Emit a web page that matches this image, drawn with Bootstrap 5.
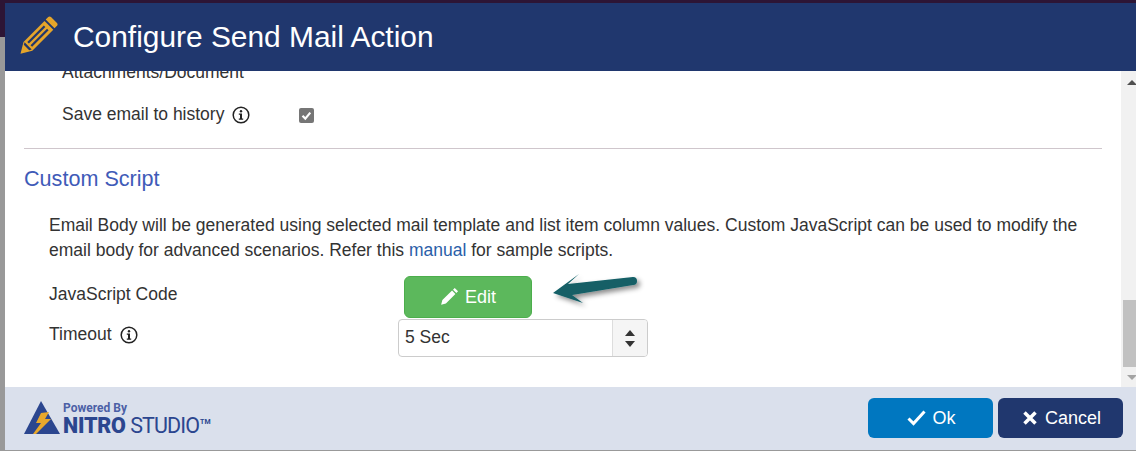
<!DOCTYPE html>
<html lang="en">
<head>
<meta charset="utf-8">
<title>Configure Send Mail Action</title>
<link href="https://cdn.jsdelivr.net/npm/bootstrap@5.3.0/dist/css/bootstrap.min.css" rel="stylesheet">
<style>
html,body{height:100%;overflow:hidden}
body{background:linear-gradient(#2d1535 37px,#999 37px);font-family:"Liberation Sans",Arial,sans-serif;font-size:17.5px;color:#333;position:relative}
.topstrip{height:3px;background:#2d1535}
.dlg{margin-left:5px;height:447px;background:#fff}
.dlg-head{height:68px;background:#20376e;color:#fff;padding-left:15px}
.dlg-head svg{width:38px;height:38px;margin-right:15px;margin-top:-4px}
.dlg-title{font-size:29.9px;line-height:1;margin:-1px 0 0;font-weight:400}
.dlg-mid{height:316px;overflow:hidden}
.scrollpane{width:1116px;overflow:hidden}
.track{width:15px;background:#f1f1f1;padding-top:9px}
.tri-up{width:0;height:0;border:5px solid transparent;border-top:0;border-bottom:5px solid #505050;margin-left:6px}
.tri-down{width:0;height:0;border:5px solid transparent;border-bottom:0;border-top:5px solid #a3a3a3;margin-left:6px}
.thumb{height:67px;background:#c1c1c1;margin:215px 0 8px 2px}
.innerpad{padding:0 19px 0 19px}
.att{margin:-9px 0 0 38px;line-height:20px}
.saverow{margin:21px 0 0 38px;line-height:24px;height:24px}
.savelbl{width:237px;padding-bottom:2px}
.iico{width:18px;height:18px;margin-left:8px;vertical-align:-4px}
.fakecheck{width:15px;height:15px;background:#767676;border-radius:2px}
.fakecheck svg{width:15px;height:15px;display:block}
.rule{margin:21px 0 0;border:0;border-top:1px solid #cfc6cc;opacity:1}
.sect{color:#3f5bb8;font-size:21.6px;font-weight:400;margin:18px 0 0;line-height:24px}
.desc{margin:22px 20px 0 25px;line-height:25px}
.desc a{color:#2a5ea8;text-decoration:none}
.coderow{margin:13px 0 0 25px;height:43px}
.codelbl{width:355px;padding-top:6px;line-height:24px;height:30px}
.editbtn{width:128px;height:42px;background:#5cb85c;border:1px solid #4cae4c;color:#fff;border-radius:6px;font-size:18px;padding:0}
.editbtn svg{width:19px;height:19px;margin-right:6px;vertical-align:-3px}
.timerow{margin:0 0 0 25px}
.timelbl{width:349px;padding-top:3px;line-height:24px}
.sel{width:250px;height:38px;border:1px solid #ccc;border-radius:4px;background:#fff}
.selval{padding-left:6px;line-height:34px;color:#333}
.spin{width:35px;background:#f5f5f5;border-left:1px solid #ddd;border-radius:0 3px 3px 0}
.spin i{display:block;width:0;height:0;border-left:5.500px solid transparent;border-right:5.500px solid transparent}
.spin .up{border-bottom:6px solid #333;margin-bottom:5px}
.spin .dn{border-top:6px solid #333}
.dlg-foot{height:63px;background:#dae0ec;padding:11px 13px 0 19px}
.logotext{line-height:1;padding-top:4px}
.lg1{font-size:12px;font-weight:700;font-family:Roboto,"Liberation Sans",sans-serif;display:block;margin-bottom:1px;color:#4c60a6}
.lg2{font-size:21.5px;font-family:Roboto,"Liberation Sans",sans-serif;color:#2b468f;letter-spacing:-.9px;white-space:nowrap}
.lg2 b{font-weight:900;letter-spacing:-.2px}
.lg2 sup{font-size:7px;font-weight:700;top:-1.3em;margin-left:1px;letter-spacing:0}
.logomark{width:36px;height:36px;margin-right:3px;margin-top:2px}
.actbtn{width:125px;height:40px;border:0;color:#fff;border-radius:6px;font-size:18px;padding:0;display:flex;align-items:center;justify-content:center}
.actbtn svg{margin-right:7px}
.okbtn{background:#0077c0}
.okbtn svg{margin-right:6px;margin-left:2px}
.cancelbtn{background:#20376e;padding-left:3px}
.cancelbtn svg{margin-right:8px}
.gapfive{gap:5px}
.arrowart{position:absolute;left:550px;top:272px;width:100px;height:40px;overflow:visible}
</style>
</head>
<body>
<div class="topstrip"></div>
<div class="dlg d-flex flex-column">
  <div class="dlg-head d-flex align-items-center">
    <svg viewBox="0 0 38 38" aria-hidden="true"><path fill="#e5a52a" d="M31 1l6 6c.8.8.8 2 0 2.800l-2.500 2.500-8.800-8.800 2.500-2.500c.8-.8 2-.8 2.800 0zM24.500 5l8.800 8.800-21 21-11.800 3 3-11.800zM23.800 9.500l-16.500 16.500 1.600 1.600 16.500-16.500zM27 12.700l-16.500 16.500 1.600 1.600 16.500-16.500zM3.800 28.800l5.400 5.400 2.500-.8-7.100-7.100z"/></svg>
    <h1 class="dlg-title">Configure Send Mail Action</h1>
  </div>
  <div class="dlg-mid d-flex">
    <div class="scrollpane">
      <div class="innerpad">
        <div class="att">Attachments/Document</div>
        <div class="saverow d-flex align-items-center">
          <div class="savelbl">Save email to history<svg class="iico" viewBox="0 0 18 18" aria-hidden="true"><circle cx="9" cy="9" r="7.800" fill="none" stroke="#222" stroke-width="1.500"/><circle cx="9" cy="5.200" r="1.200" fill="#222"/><path fill="#222" d="M6.800 7.500h3.200v5h1.200v1.200h-4.400v-1.200h1.200v-3.800h-1.200z"/></svg></div>
          <div class="fakecheck"><svg viewBox="0 0 15 15" aria-hidden="true"><path fill="none" stroke="#fff" stroke-width="2.200" d="M3.500 7.800l2.800 2.800 5-6"/></svg></div>
        </div>
        <hr class="rule">
        <h2 class="sect">Custom Script</h2>
        <p class="desc">Email Body will be generated using selected mail template and list item column values. Custom JavaScript can be used to modify the email body for advanced scenarios. Refer this <a href="#">manual</a> for sample scripts.</p>
        <div class="coderow d-flex">
          <div class="codelbl">JavaScript Code</div>
          <button type="button" class="btn editbtn"><svg viewBox="0 0 20 20" aria-hidden="true"><path fill="#fff" d="M15.500 1l3.500 3.500-1.800 1.800-3.500-3.500zM12.700 3.800l3.500 3.500-10 10-5 1.300 1.300-5z"/></svg>Edit</button>
        </div>
        <div class="timerow d-flex">
          <div class="timelbl">Timeout<svg class="iico" viewBox="0 0 18 18" aria-hidden="true"><circle cx="9" cy="9" r="7.800" fill="none" stroke="#222" stroke-width="1.500"/><circle cx="9" cy="5.200" r="1.200" fill="#222"/><path fill="#222" d="M6.800 7.500h3.200v5h1.200v1.200h-4.400v-1.200h1.200v-3.800h-1.200z"/></svg></div>
          <div class="sel d-flex justify-content-between">
            <div class="selval">5 Sec</div>
            <div class="spin d-flex flex-column align-items-center justify-content-center"><i class="up"></i><i class="dn"></i></div>
          </div>
        </div>
      </div>
    </div>
    <div class="track flex-shrink-0 ms-auto">
      <div class="tri-up"></div>
      <div class="thumb"></div>
      <div class="tri-down"></div>
    </div>
  </div>
  <div class="dlg-foot d-flex justify-content-between">
    <div class="d-flex align-items-start">
      <svg class="logomark" viewBox="0 0 36 36" aria-hidden="true"><path fill="#2b468f" d="M17 1l19 33h-36z"/><path fill="#e8a82c" d="M25 12l-8 1-5 10h5l-8 11h3l15-15h-6z"/></svg>
      <div class="logotext"><span class="lg1">Powered By</span><span class="lg2"><b>NITRO</b> STUDIO<sup>TM</sup></span></div>
    </div>
    <div class="d-flex gapfive">
      <button type="button" class="btn actbtn okbtn"><svg width="19" height="16" viewBox="0 0 19 16" aria-hidden="true"><path fill="none" stroke="#fff" stroke-width="3" d="M1.500 8.500l5 5 11-12"/></svg>Ok</button>
      <button type="button" class="btn actbtn cancelbtn"><svg width="14" height="14" viewBox="0 0 14 14" aria-hidden="true"><path fill="none" stroke="#fff" stroke-width="3.500" d="M1.500 1.500l11 11M12.500 1.500l-11 11"/></svg>Cancel</button>
    </div>
  </div>
</div>
<svg class="arrowart" viewBox="0 0 100 40" aria-hidden="true">
  <defs><filter id="sh" x="-20%" y="-40%" width="140%" height="200%"><feDropShadow dx="3" dy="3" stdDeviation="2.500" flood-color="#000" flood-opacity=".45"/></filter></defs>
  <path filter="url(#sh)" fill="#125f66" d="M3 21L29 2 18 12 83 5Q87 5 87 9 87 13 83 13L22 23 33 31Z"/>
</svg>
</body>
</html>
